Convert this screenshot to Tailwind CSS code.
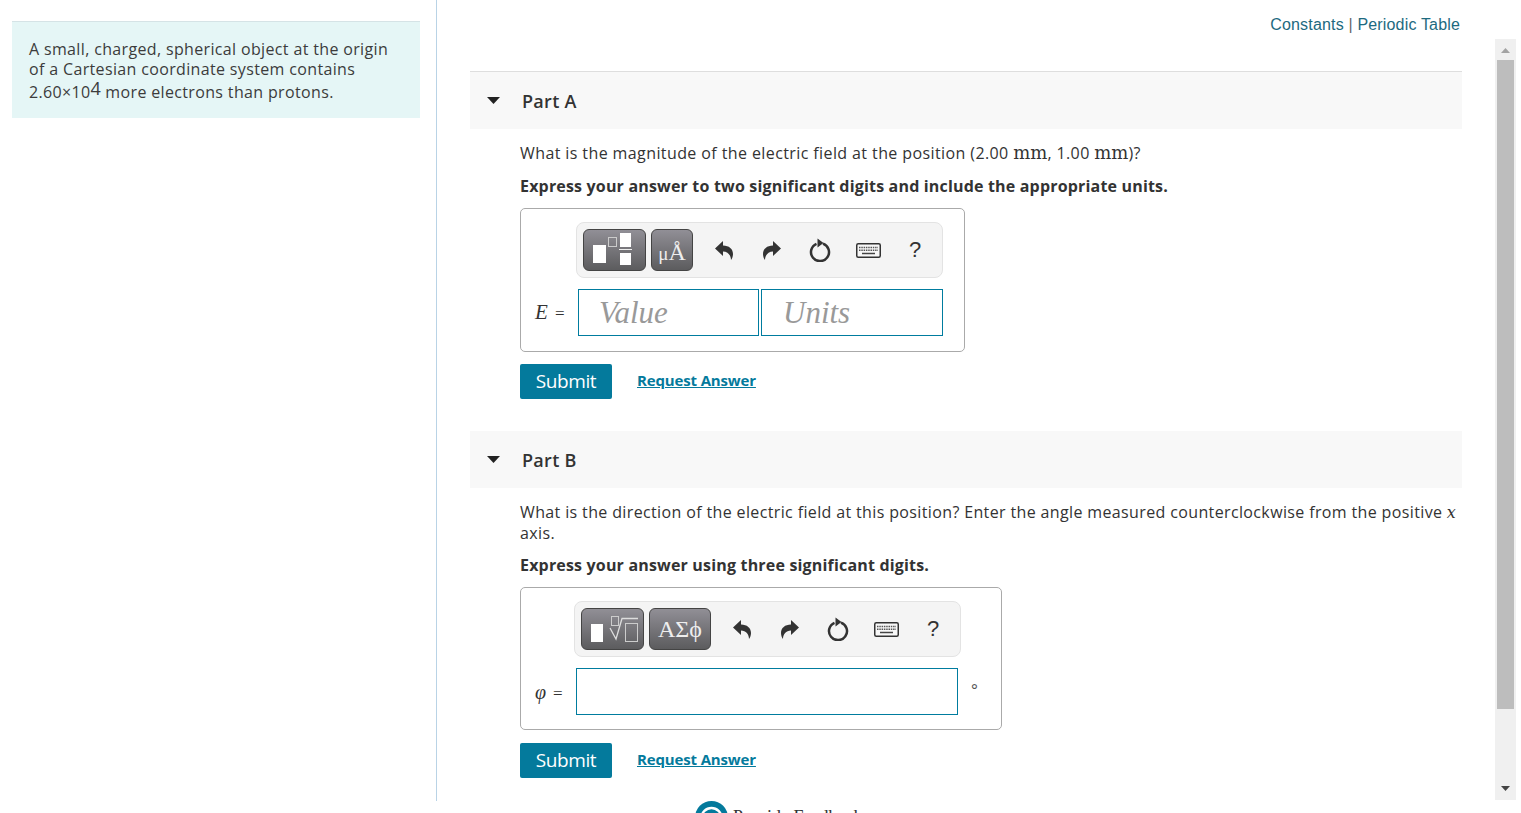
<!DOCTYPE html>
<html lang="en">
<head>
    <meta charset="UTF-8">
    <title>Part A and Part B</title>
    <script src="https://cdn.jsdelivr.net/npm/@tailwindcss/browser@4"></script>
</head>
<body class="h-[813px] overflow-hidden bg-white flex font-['Open_Sans',sans-serif] text-[16px] text-[#333]">
    <!-- left problem pane -->
    <aside class="w-[437px] h-[801px] shrink-0 border-r border-[#b9d3e6] pl-3 pr-4 pt-[21px]">
        <div class="h-[97px] bg-[#e5f6f6] border-t border-[#d5e3e6] pl-[17px] pt-[17px] text-[16px] leading-[20px] tracking-[0.35px] text-[#3c3c3c]">
            <p>A small, charged, spherical object at the origin</p>
            <p>of a Cartesian coordinate system contains</p>
            <p class="mt-[3px]">2.60×10<sup class="text-[18px] leading-none -top-[3px] tracking-normal">4</sup> more electrons than protons.</p>
        </div>
    </aside>

    <main class="w-[992px] ml-[33px] shrink-0">
        <div class="h-[71px] pt-[14px] pr-[2px] text-right text-[16px] leading-[22px] tracking-[0.17px] font-['Liberation_Sans',sans-serif] text-[#1d6a80]">
            <a href="#">Constants</a> <span class="text-[#666]">|</span> <a href="#">Periodic Table</a>
        </div>

        <!-- Part A -->
        <div class="h-[58px] bg-[#f8f8f8] border-t border-[#dedede] flex items-center">
            <svg class="ml-[17px] w-[13px] h-[7px]" viewBox="0 0 13 7"><path d="M0 0h13L6.500 7z" fill="#222"/></svg>
            <h2 class="ml-[22px] mt-[2px] text-[18px] font-semibold text-[#333] tracking-[0.3px]">Part A</h2>
        </div>
        <div class="pl-[50px]">
            <p class="mt-[13px] h-[22px] leading-[22px] tracking-[0.4px]">What is the magnitude of the electric field at the position (2.00 <span class="font-['DejaVu_Serif',serif] text-[18px] tracking-normal">mm</span>, 1.00 <span class="font-['DejaVu_Serif',serif] text-[18px] tracking-normal">mm</span>)?</p>
            <p class="mt-[11px] h-[22px] leading-[22px] font-bold tracking-[0.18px]">Express your answer to two significant digits and include the appropriate units.</p>

            <div class="mt-[11px] w-[445px] h-[144px] border border-[#aaa] rounded-[5px] pl-[55px] pt-[13px]">
                <div class="w-[367px] h-[56px] bg-[#f4f4f4] border border-[#e3e3e3] rounded-lg flex items-center pl-[6px] gap-[5px]">
                    <button class="w-[63px] h-[42px] rounded-md border border-[#444] bg-linear-to-b from-[#918f96] to-[#5c5c5e]">
                        <svg class="block" width="61" height="40" viewBox="0 0 61 40">
                            <rect x="9" y="15" width="13" height="18" fill="#fff"/>
                            <rect x="24.500" y="7.500" width="8" height="9" fill="none" stroke="#ccc"/>
                            <rect x="36" y="3" width="11" height="14" fill="#fff"/>
                            <rect x="35" y="19" width="13" height="1" fill="#eee"/>
                            <rect x="36" y="23" width="11" height="12" fill="#fff"/>
                        </svg>
                    </button>
                    <button class="w-[42px] h-[42px] rounded-md border border-[#444] bg-linear-to-b from-[#918f96] to-[#5c5c5e] font-['Liberation_Serif',serif] text-[#eee] leading-[40px] whitespace-nowrap pt-[2px]"><span class="text-[19px]">μ</span><span class="text-[24px]">Å</span></button>
                    <div class="ml-[2px] w-[48px] flex justify-center">
                        <svg width="18" height="19" viewBox="0 0 18 19"><path d="M0 7.500L8 0V4.500C14 4.500 18 8 18 13C18 15 17.300 17.500 16 19C16 14.500 13 10.500 8 10.500V15Z" fill="#333"/></svg>
                    </div>
                    <div class="-ml-[5px] w-[48px] flex justify-center">
                        <svg width="18" height="19" viewBox="0 0 18 19"><path d="M18 7.500L10 0V4.500C4 4.500 0 8 0 13C0 15 .7 17.500 2 19C2 14.500 5 10.500 10 10.500V15Z" fill="#333"/></svg>
                    </div>
                    <div class="-ml-[5px] w-[48px] flex justify-center">
                        <svg width="22" height="24" viewBox="0 0 22 24"><path d="M7.500 5.800A9 9 0 1 0 14 5.600" fill="none" stroke="#333" stroke-width="2.500"/><path d="M8.500 .5L14.500 5L8.500 9.500Z" fill="#333"/></svg>
                    </div>
                    <div class="-ml-[5px] w-[48px] flex justify-center">
                        <svg width="25" height="15" viewBox="0 0 25 15"><rect x=".75" y=".75" width="23.500" height="13.500" rx="1.500" fill="#f8f8f8" stroke="#333" stroke-width="1.500"/><path d="M3 4.500h19M3 7.200h19" stroke="#555" stroke-width="1.500" stroke-dasharray="1.500 .8"/><path d="M6 10.500h13" stroke="#444" stroke-width="1.500"/></svg>
                    </div>
                    <div class="-ml-[5px] -mt-[1px] w-[46px] text-center text-[22px] font-['Liberation_Sans',sans-serif] text-[#333]">?</div>
                </div>
                <div class="flex mt-[11px] -ml-[41px] items-center">
                    <span class="w-[43px] font-['Liberation_Serif',serif] text-[21px] whitespace-nowrap"><i>E</i> <span class="ml-[2px] text-[17px]">=</span></span>
                    <input class="w-[181px] h-[47px] border border-[#007c9f] pl-[20px] text-[31px] italic font-['Liberation_Serif',serif] placeholder:text-[#999] outline-none" placeholder="Value">
                    <input class="ml-[2px] w-[182px] h-[47px] border border-[#007c9f] pl-[21px] text-[31px] italic font-['Liberation_Serif',serif] placeholder:text-[#999] outline-none" placeholder="Units">
                </div>
            </div>

            <div class="mt-[12px] flex items-center">
                <button class="w-[92px] h-[35px] bg-[#047a9c] rounded-[2px] text-white text-[19px] tracking-[-0.4px]">Submit</button>
                <a href="#" class="ml-[25px] -mt-[2px] text-[15px] font-bold underline text-[#047a9c] tracking-[-0.15px]">Request Answer</a>
            </div>
        </div>

        <!-- Part B -->
        <div class="mt-[32px] h-[57px] bg-[#f8f8f8] flex items-center">
            <svg class="ml-[17px] w-[13px] h-[7px]" viewBox="0 0 13 7"><path d="M0 0h13L6.500 7z" fill="#222"/></svg>
            <h2 class="ml-[22px] mt-[2px] text-[18px] font-semibold text-[#333] tracking-[0.3px]">Part B</h2>
        </div>
        <div class="pl-[50px]">
            <p class="mt-[14px] leading-[20px] tracking-[0.365px]">What is the direction of the electric field at this position? Enter the angle measured counterclockwise from the positive <i class="font-['DejaVu_Serif',serif] text-[16px] tracking-normal">x</i> axis.</p>
            <p class="mt-[11px] h-[22px] leading-[22px] font-bold tracking-[0.18px]">Express your answer using three significant digits.</p>

            <div class="mt-[11px] w-[482px] h-[143px] border border-[#aaa] rounded-[5px] pl-[53px] pt-[13px]">
                <div class="w-[387px] h-[56px] bg-[#f4f4f4] border border-[#e3e3e3] rounded-lg flex items-center pl-[6px] gap-[5px]">
                    <button class="w-[63px] h-[42px] rounded-md border border-[#444] bg-linear-to-b from-[#918f96] to-[#5c5c5e]">
                        <svg class="block" width="61" height="40" viewBox="0 0 61 40">
                            <rect x="9" y="15" width="12" height="18" fill="#fff"/>
                            <rect x="29.500" y="7.500" width="7" height="9" fill="none" stroke="#ccc"/>
                            <path d="M28 19L34 30L40 9.500H56" fill="none" stroke="#ddd" stroke-width="1.300"/>
                            <rect x="43.500" y="14.500" width="12" height="18" fill="none" stroke="#ccc"/>
                        </svg>
                    </button>
                    <button class="w-[62px] h-[42px] rounded-md border border-[#444] bg-linear-to-b from-[#918f96] to-[#5c5c5e] font-['Liberation_Serif',serif] text-[#eee] text-[24px] leading-[36px] whitespace-nowrap">ΑΣϕ</button>
                    <div class="ml-[2px] w-[48px] flex justify-center">
                        <svg width="18" height="19" viewBox="0 0 18 19"><path d="M0 7.500L8 0V4.500C14 4.500 18 8 18 13C18 15 17.300 17.500 16 19C16 14.500 13 10.500 8 10.500V15Z" fill="#333"/></svg>
                    </div>
                    <div class="-ml-[5px] w-[48px] flex justify-center">
                        <svg width="18" height="19" viewBox="0 0 18 19"><path d="M18 7.500L10 0V4.500C4 4.500 0 8 0 13C0 15 .7 17.500 2 19C2 14.500 5 10.500 10 10.500V15Z" fill="#333"/></svg>
                    </div>
                    <div class="-ml-[5px] w-[48px] flex justify-center">
                        <svg width="22" height="24" viewBox="0 0 22 24"><path d="M7.500 5.800A9 9 0 1 0 14 5.600" fill="none" stroke="#333" stroke-width="2.500"/><path d="M8.500 .5L14.500 5L8.500 9.500Z" fill="#333"/></svg>
                    </div>
                    <div class="-ml-[5px] w-[48px] flex justify-center">
                        <svg width="25" height="15" viewBox="0 0 25 15"><rect x=".75" y=".75" width="23.500" height="13.500" rx="1.500" fill="#f8f8f8" stroke="#333" stroke-width="1.500"/><path d="M3 4.500h19M3 7.200h19" stroke="#555" stroke-width="1.500" stroke-dasharray="1.500 .8"/><path d="M6 10.500h13" stroke="#444" stroke-width="1.500"/></svg>
                    </div>
                    <div class="-ml-[5px] -mt-[1px] w-[46px] text-center text-[22px] font-['Liberation_Sans',sans-serif] text-[#333]">?</div>
                </div>
                <div class="flex mt-[11px] -ml-[39px] items-center">
                    <span class="w-[41px] font-['Liberation_Serif',serif] text-[20px] whitespace-nowrap"><i>φ</i> <span class="ml-[2px] text-[17px]">=</span></span>
                    <input class="w-[382px] h-[47px] border border-[#007c9f] outline-none">
                    <span class="ml-[13px] -mt-[4px] text-[16px] text-[#555]">°</span>
                </div>
            </div>

            <div class="mt-[13px] flex items-center">
                <button class="w-[92px] h-[35px] bg-[#047a9c] rounded-[2px] text-white text-[19px] tracking-[-0.4px]">Submit</button>
                <a href="#" class="ml-[25px] -mt-[2px] text-[15px] font-bold underline text-[#047a9c] tracking-[-0.15px]">Request Answer</a>
            </div>

            <div class="mt-[23px] ml-[175px] flex items-start">
                <svg class="shrink-0" width="33" height="33" viewBox="0 0 33 33"><circle cx="16.500" cy="16.500" r="16.500" fill="#047a9c"/><circle cx="16.500" cy="17" r="10" fill="none" stroke="#fff" stroke-width="2.500"/></svg>
                <span class="ml-[5px] mt-[7px] font-['Liberation_Serif',serif] text-[18px] leading-[18px]">Provide Feedback</span>
            </div>
        </div>
    </main>

    <!-- scrollbar -->
    <div class="ml-[33px] mt-[39px] w-[21px] h-[761px] shrink-0 bg-[#f0f0f0] flex flex-col items-center">
        <svg class="mt-[9px]" width="9" height="5" viewBox="0 0 9 5"><path d="M4.500 0L9 5H0z" fill="#a3a3a3"/></svg>
        <div class="mt-[7px] w-[17px] h-[649px] bg-[#bdbdbd]"></div>
        <svg class="mt-[77px]" width="9" height="5" viewBox="0 0 9 5"><path d="M0 0H9L4.500 5z" fill="#444"/></svg>
    </div>
</body>
</html>
